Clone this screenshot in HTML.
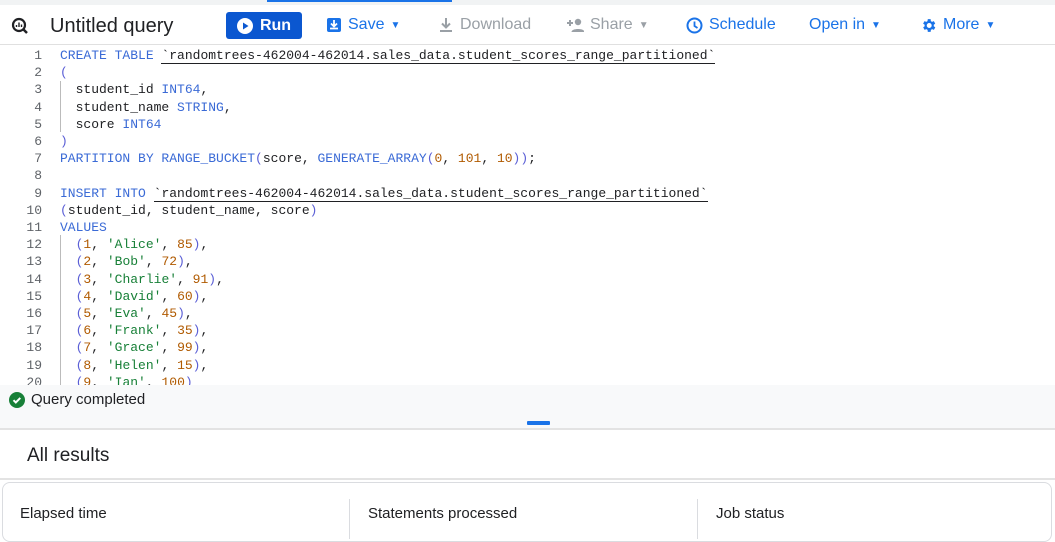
<!DOCTYPE html>
<html><head><style>
*{margin:0;padding:0;box-sizing:border-box}
body{width:1055px;height:531px;overflow:hidden;background:#fff;font-family:"Liberation Sans",sans-serif;position:relative}
.top{position:absolute;left:0;top:0;width:1055px;height:5px;background:#f1f3f4}
.top i{position:absolute;left:267px;top:0;width:185px;height:2px;background:#1a73e8}
.tb{position:absolute;top:5px;left:0;width:1055px;height:40px;border-bottom:1px solid #e0e0e0;background:#fff}
.t{position:absolute;top:11px;font-size:16px;color:#1a73e8;display:flex;align-items:center;gap:6px;white-space:nowrap}
.g{color:#9aa0a6}
.run{position:absolute;left:226px;top:7px;width:76px;height:27px;background:#0b57d0;border-radius:3px;color:#fff;font-size:16px;font-weight:bold;display:flex;align-items:center;justify-content:center;gap:7px}
.code{position:absolute;left:0;top:47px;width:1055px;height:338px;overflow:hidden;font-family:"Liberation Mono",monospace;font-size:13px}
.l{position:absolute;left:0;height:17px;line-height:17px;white-space:pre;color:#202124}
.n{display:inline-block;width:42px;text-align:right;color:#5f6368;margin-right:18px}
.k{color:#3a6ad6}.s{color:#188038}.d{color:#b05a00}.p{color:#5b5fd6}
.u{border-bottom:1.5px solid #202124}
.guide{position:absolute;left:60px;width:1px;background:#bbb}
.status{position:absolute;left:0;top:385px;width:1055px;height:45px;background:#f8f9fa;border-bottom:2px solid #e3e3e3}
.res{position:absolute;left:0;top:430px;width:1055px;height:50px;border-bottom:2px solid #e3e3e3}
.card{position:absolute;left:2px;top:482px;width:1050px;height:60px;border:1px solid #dadce0;border-radius:8px}
.c{position:absolute;top:22px;font-size:15px;color:#202124}
.sep{position:absolute;top:16px;width:1px;height:40px;background:#dadce0}
</style></head><body>
<div class="top"><i></i></div>
<div class="tb">
<svg style="position:absolute;left:11px;top:12px" width="18" height="18" viewBox="0 0 18 18"><circle cx="8" cy="8" r="6" fill="none" stroke="#202124" stroke-width="2.2"/><path d="M12 12l4 4" stroke="#202124" stroke-width="2.5"/><path d="M5.5 10V8M8 10V5.5M10.5 10V7.5" stroke="#202124" stroke-width="1.4"/></svg>
<div style="position:absolute;left:50px;top:10px;font-size:20px;color:#202124">Untitled query</div>
<div class="run"><svg width="16" height="16"><circle cx="8" cy="8" r="8" fill="#fff"/><path d="M6 4.5v7l5.5-3.5z" fill="#0b57d0"/></svg>Run</div>
<div class="t" style="left:326px"><svg width="16" height="16"><rect x="1" y="1" width="14" height="14" rx="2" fill="#1a73e8"/><path d="M8 3v6M5 6.5l3 3 3-3M4 11.5h8" stroke="#fff" stroke-width="1.8" fill="none"/></svg>Save <span style="font-size:10px">▼</span></div>
<div class="t g" style="left:438px"><svg width="16" height="16"><path d="M8 1v9M4 6.5l4 4 4-4" stroke="#9aa0a6" stroke-width="2" fill="none"/><path d="M2 14h12" stroke="#9aa0a6" stroke-width="2"/></svg>Download</div>
<div class="t g" style="left:566px"><svg width="18" height="16"><path d="M1 6h6M4 3v6" stroke="#9aa0a6" stroke-width="2"/><circle cx="12" cy="5" r="3.2" fill="#9aa0a6"/><path d="M5.5 15c0-4 13-4 13 0z" fill="#9aa0a6"/></svg>Share <span style="font-size:10px">▼</span></div>
<div class="t" style="left:686px"><svg width="17" height="17"><circle cx="8.5" cy="8.5" r="7" fill="none" stroke="#1a73e8" stroke-width="2"/><path d="M8.5 4.5v4.5l3 2" stroke="#1a73e8" stroke-width="1.8" fill="none"/></svg>Schedule</div>
<div class="t" style="left:809px">Open in <span style="font-size:10px">▼</span></div>
<div class="t" style="left:920px"><svg width="17" height="17" viewBox="0 0 24 24"><path fill="#1a73e8" d="M19.4 13a7.8 7.8 0 000-2l2.1-1.6-2-3.5-2.5 1a7.3 7.3 0 00-1.7-1L15 3h-4l-.4 2.9a7.3 7.3 0 00-1.7 1l-2.5-1-2 3.5L6.6 11a7.8 7.8 0 000 2l-2.1 1.6 2 3.5 2.5-1a7.3 7.3 0 001.7 1L11 21h4l.4-2.9a7.3 7.3 0 001.7-1l2.5 1 2-3.5zM13 15.5a3.5 3.5 0 110-7 3.5 3.5 0 010 7z"/></svg>More <span style="font-size:10px">▼</span></div>
</div>
<div class="code">
<div class="guide" style="top:34px;height:51px"></div>
<div class="guide" style="top:188px;height:160px"></div>
<div class="l" style="top:0"><span class="n">1</span><span class="k">CREATE TABLE</span> <span class="u">`randomtrees-462004-462014.sales_data.student_scores_range_partitioned`</span></div>
<div class="l" style="top:17.2px"><span class="n">2</span><span class="p">(</span></div>
<div class="l" style="top:34.4px"><span class="n">3</span>  student_id <span class="k">INT64</span>,</div>
<div class="l" style="top:51.6px"><span class="n">4</span>  student_name <span class="k">STRING</span>,</div>
<div class="l" style="top:68.8px"><span class="n">5</span>  score <span class="k">INT64</span></div>
<div class="l" style="top:86px"><span class="n">6</span><span class="p">)</span></div>
<div class="l" style="top:103.2px"><span class="n">7</span><span class="k">PARTITION BY RANGE_BUCKET</span><span class="p">(</span>score, <span class="k">GENERATE_ARRAY</span><span class="p">(</span><span class="d">0</span>, <span class="d">101</span>, <span class="d">10</span><span class="p">))</span>;</div>
<div class="l" style="top:120.4px"><span class="n">8</span></div>
<div class="l" style="top:137.6px"><span class="n">9</span><span class="k">INSERT INTO</span> <span class="u">`randomtrees-462004-462014.sales_data.student_scores_range_partitioned`</span></div>
<div class="l" style="top:154.8px"><span class="n">10</span><span class="p">(</span>student_id, student_name, score<span class="p">)</span></div>
<div class="l" style="top:172px"><span class="n">11</span><span class="k">VALUES</span></div>
<div class="l" style="top:189.2px"><span class="n">12</span>  <span class="p">(</span><span class="d">1</span>, <span class="s">'Alice'</span>, <span class="d">85</span><span class="p">)</span>,</div>
<div class="l" style="top:206.4px"><span class="n">13</span>  <span class="p">(</span><span class="d">2</span>, <span class="s">'Bob'</span>, <span class="d">72</span><span class="p">)</span>,</div>
<div class="l" style="top:223.6px"><span class="n">14</span>  <span class="p">(</span><span class="d">3</span>, <span class="s">'Charlie'</span>, <span class="d">91</span><span class="p">)</span>,</div>
<div class="l" style="top:240.8px"><span class="n">15</span>  <span class="p">(</span><span class="d">4</span>, <span class="s">'David'</span>, <span class="d">60</span><span class="p">)</span>,</div>
<div class="l" style="top:258px"><span class="n">16</span>  <span class="p">(</span><span class="d">5</span>, <span class="s">'Eva'</span>, <span class="d">45</span><span class="p">)</span>,</div>
<div class="l" style="top:275.2px"><span class="n">17</span>  <span class="p">(</span><span class="d">6</span>, <span class="s">'Frank'</span>, <span class="d">35</span><span class="p">)</span>,</div>
<div class="l" style="top:292.4px"><span class="n">18</span>  <span class="p">(</span><span class="d">7</span>, <span class="s">'Grace'</span>, <span class="d">99</span><span class="p">)</span>,</div>
<div class="l" style="top:309.6px"><span class="n">19</span>  <span class="p">(</span><span class="d">8</span>, <span class="s">'Helen'</span>, <span class="d">15</span><span class="p">)</span>,</div>
<div class="l" style="top:326.8px"><span class="n">20</span>  <span class="p">(</span><span class="d">9</span>, <span class="s">'Ian'</span>, <span class="d">100</span><span class="p">)</span></div>
</div>
<div class="status">
<svg style="position:absolute;left:9px;top:7px" width="16" height="16"><circle cx="8" cy="8" r="8" fill="#188038"/><path d="M4.5 8.2l2.3 2.3 4.5-4.6" stroke="#fff" stroke-width="2" fill="none"/></svg>
<div style="position:absolute;left:31px;top:6px;font-size:15px;color:#202124">Query completed</div>
<div style="position:absolute;left:527px;top:36px;width:23px;height:4px;background:#1a73e8;border-radius:1px"></div>
</div>
<div class="res"><div style="position:absolute;left:27px;top:15px;font-size:19px;color:#202124">All results</div></div>
<div class="card">
<div class="c" style="left:17px">Elapsed time</div>
<div class="sep" style="left:346px"></div>
<div class="c" style="left:365px">Statements processed</div>
<div class="sep" style="left:694px"></div>
<div class="c" style="left:713px">Job status</div>
</div>
</body></html>
